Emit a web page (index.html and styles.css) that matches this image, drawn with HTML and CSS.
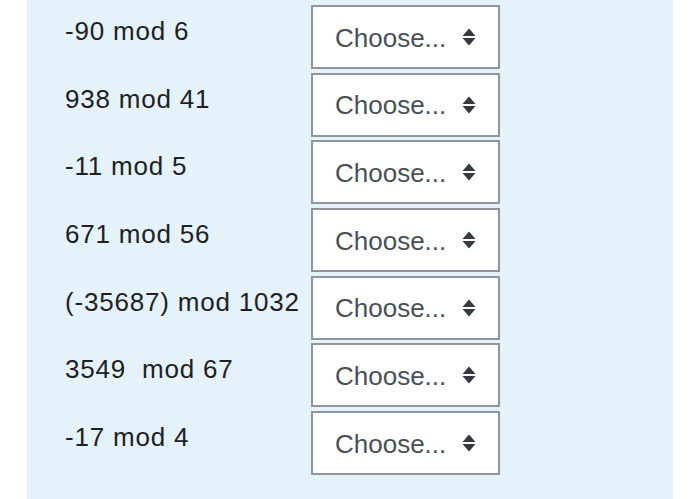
FILE: index.html
```html
<!DOCTYPE html>
<html lang="en">
<head>
<meta charset="utf-8">
<title>Match</title>
<link rel="stylesheet" href="styles.css">
</head>
<body>
<div class="formulation">
  <div class="answer">
    <div class="text">-90 mod 6</div>
    <div class="select"><span>Choose...</span><svg class="caret" width="14" height="18" viewBox="0 0 14 18"><path d="M0.5 8 L7 0.5 L13.5 8 Z M0.5 10 L13.5 10 L7 17.5 Z" fill="#343a40"/></svg></div>

    <div class="text">938 mod 41</div>
    <div class="select"><span>Choose...</span><svg class="caret" width="14" height="18" viewBox="0 0 14 18"><path d="M0.5 8 L7 0.5 L13.5 8 Z M0.5 10 L13.5 10 L7 17.5 Z" fill="#343a40"/></svg></div>

    <div class="text">-11 mod 5</div>
    <div class="select"><span>Choose...</span><svg class="caret" width="14" height="18" viewBox="0 0 14 18"><path d="M0.5 8 L7 0.5 L13.5 8 Z M0.5 10 L13.5 10 L7 17.5 Z" fill="#343a40"/></svg></div>

    <div class="text">671 mod 56</div>
    <div class="select"><span>Choose...</span><svg class="caret" width="14" height="18" viewBox="0 0 14 18"><path d="M0.5 8 L7 0.5 L13.5 8 Z M0.5 10 L13.5 10 L7 17.5 Z" fill="#343a40"/></svg></div>

    <div class="text">(-35687) mod 1032</div>
    <div class="select"><span>Choose...</span><svg class="caret" width="14" height="18" viewBox="0 0 14 18"><path d="M0.5 8 L7 0.5 L13.5 8 Z M0.5 10 L13.5 10 L7 17.5 Z" fill="#343a40"/></svg></div>

    <div class="text">3549&nbsp; mod 67</div>
    <div class="select"><span>Choose...</span><svg class="caret" width="14" height="18" viewBox="0 0 14 18"><path d="M0.5 8 L7 0.5 L13.5 8 Z M0.5 10 L13.5 10 L7 17.5 Z" fill="#343a40"/></svg></div>

    <div class="text">-17 mod 4</div>
    <div class="select"><span>Choose...</span><svg class="caret" width="14" height="18" viewBox="0 0 14 18"><path d="M0.5 8 L7 0.5 L13.5 8 Z M0.5 10 L13.5 10 L7 17.5 Z" fill="#343a40"/></svg></div>
  </div>
</div>
</body>
</html>
```

FILE: styles.css
```css
html, body {
  margin: 0;
  padding: 0;
  background: #ffffff;
}

body {
  font-family: "Liberation Sans", Arial, sans-serif;
  overflow: hidden;
}

.formulation {
  margin: 0 27px;
  height: 100vh;
  background: #e6f2fa;
  padding: 5px 0 0 38px;
  box-sizing: border-box;
}

.answer {
  display: grid;
  grid-template-columns: 235px 189px;
  column-gap: 11px;
  row-gap: 3.7px;
  align-items: start;
}

.text {
  font-size: 26px;
  line-height: 31px;
  letter-spacing: 0.8px;
  color: #1d2125;
  padding-top: 11px;
  white-space: nowrap;
}

.select {
  height: 64px;
  box-sizing: border-box;
  border: 2px solid #8f959e;
  background: #ffffff;
  display: flex;
  align-items: center;
  justify-content: space-between;
  padding: 0 22px 0 22px;
  font-size: 26px;
  color: #495057;
}

.select span {
  line-height: 1;
  padding-top: 1px;
}

.caret {
  display: block;
  flex: none;
}
```
